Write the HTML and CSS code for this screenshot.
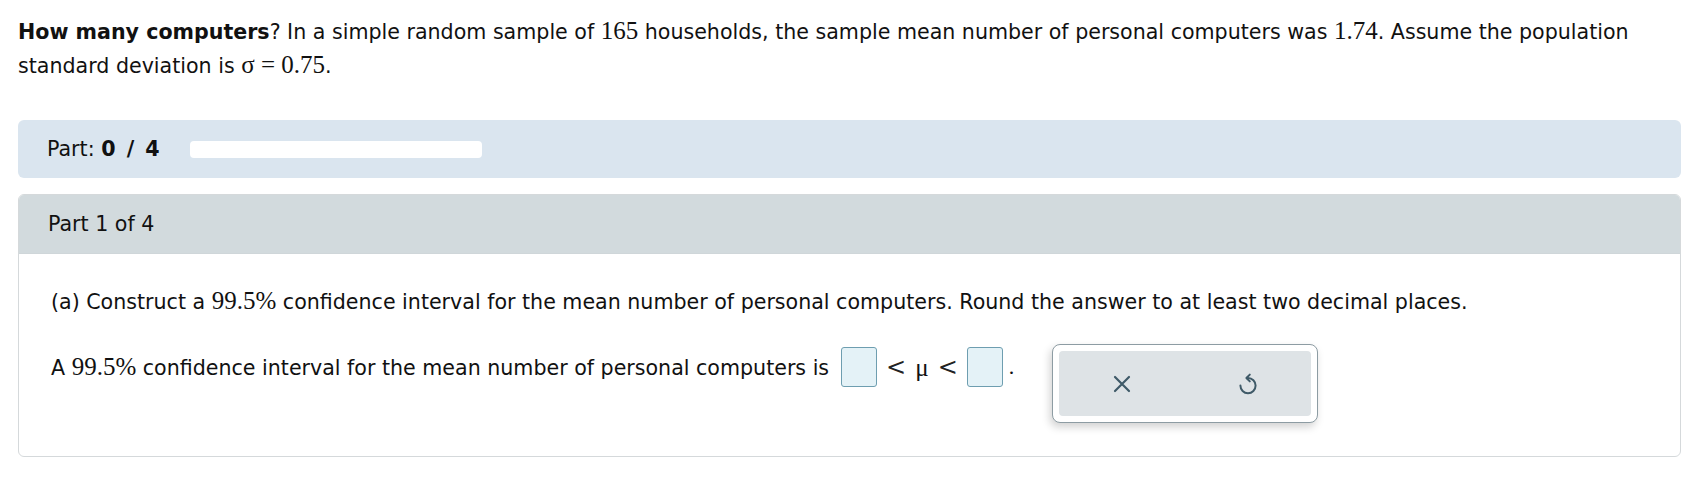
FILE: index.html
```html
<!DOCTYPE html>
<html>
<head>
<meta charset="utf-8">
<link rel="stylesheet" href="styles.css">
</head>
<body>
<div class="page">
  <p class="question"><b>How many computers</b>? In a simple random sample of <span class="m">165</span> households, the sample mean number of personal computers was <span class="m">1.74</span>. Assume the population standard deviation is <span class="m">σ = 0.75</span>.</p>

  <div class="progress">
    <span class="plabel">Part: <b class="pnum">0 / 4</b></span>
    <div class="pbar"></div>
  </div>

  <div class="part">
    <div class="part-head">Part 1 of 4</div>
    <div class="part-body">
      <p class="q">(a) Construct a <span class="m">99.5%</span> confidence interval for the mean number of personal computers. Round the answer to at least two decimal places.</p>
      <div class="answer">
        <div class="sentence">
          <span class="stext">A <span class="m">99.5%</span> confidence interval for the mean number of personal computers is</span>
          <span class="box box-first"></span>
          <span class="rel">&lt;</span>
          <span class="m mu">μ</span>
          <span class="rel">&lt;</span>
          <span class="box"></span>
          <span class="dot">.</span>
        </div>
        <div class="tools">
          <div class="tools-inner">
            <div class="tool">
              <svg width="18" height="18" viewBox="0 0 18 18"><path d="M2 2 L16 16 M16 2 L2 16" fill="none" stroke="#3f5a68" stroke-width="2.2" stroke-linecap="round"/></svg>
            </div>
            <div class="tool">
              <svg width="20" height="24" viewBox="0 0 20 24"><path d="M10 6 A7.6 7.6 0 1 1 2.4 13.6" fill="none" stroke="#3f5a68" stroke-width="2" stroke-linecap="round"/><path d="M11.8 2.6 L8.4 6 L11.8 9.4" fill="none" stroke="#3f5a68" stroke-width="2" stroke-linecap="round" stroke-linejoin="round"/></svg>
            </div>
          </div>
        </div>
      </div>
    </div>
  </div>
</div>
</body>
</html>
```

FILE: styles.css
```css
html, body {
  margin: 0;
  padding: 0;
  background: #ffffff;
}

body {
  font-family: "DejaVu Sans", Verdana, sans-serif;
  font-size: 20.6px;
  color: #111;
}

.page {
  padding: 15px 2px 0 18px;
}

.question {
  margin: 0;
  line-height: 34px;
}

.question b {
  font-weight: bold;
}

.m {
  font-family: "Liberation Serif", "Times New Roman", serif;
  font-size: 25px;
  line-height: 1;
}

.progress {
  margin-top: 37px;
  height: 58px;
  background: #dae5ef;
  border-radius: 6px;
  display: flex;
  align-items: center;
  padding-left: 29px;
}

.plabel {
  font-size: 20.6px;
  color: #111;
}

.pnum {
  word-spacing: 4px;
}

.pbar {
  margin-left: 30px;
  width: 292px;
  height: 17px;
  background: #ffffff;
  border-radius: 4px;
}

.part {
  margin-top: 16px;
  border: 1px solid #d5d9db;
  border-radius: 6px;
  overflow: hidden;
}

.part-head {
  height: 59px;
  background: #d2dadd;
  display: flex;
  align-items: center;
  padding-left: 29px;
  font-size: 20.6px;
  color: #111;
  border-bottom: 1px solid #cfd6d9;
  box-sizing: border-box;
}

.part-body {
  padding: 31px 32px 33px 32px;
}

.q {
  margin: 0 0 25px 0;
  line-height: 34px;
}

.answer {
  display: flex;
  align-items: flex-start;
}

.sentence {
  margin-top: 3px;
  height: 40px;
  display: flex;
  align-items: center;
  white-space: nowrap;
}

.box {
  display: inline-block;
  width: 36px;
  height: 40px;
  box-sizing: border-box;
  border: 1.5px solid #6e9eb0;
  background: #e4f2f7;
  border-radius: 3px;
}

.box-first {
  margin-left: 12px;
}

.rel {
  font-family: "DejaVu Serif", "Liberation Serif", serif;
  font-size: 24px;
  color: #222;
  margin: 0 9px;
}

.dot {
  margin-left: 6px;
  font-family: "Liberation Serif", serif;
  font-size: 22px;
}

.tools {
  margin-left: 38px;
  width: 266px;
  height: 79px;
  box-sizing: border-box;
  border: 1px solid #8d9ca3;
  border-radius: 8px;
  background: #ffffff;
  padding: 6px;
  box-shadow: -2px 4px 8px rgba(0, 0, 0, 0.18);
}

.tools-inner {
  height: 100%;
  background: #dee3e6;
  border-radius: 4px;
  display: flex;
}

.tool {
  flex: 1;
  display: flex;
  align-items: center;
  justify-content: center;
}

.tool svg {
  display: block;
}
```
